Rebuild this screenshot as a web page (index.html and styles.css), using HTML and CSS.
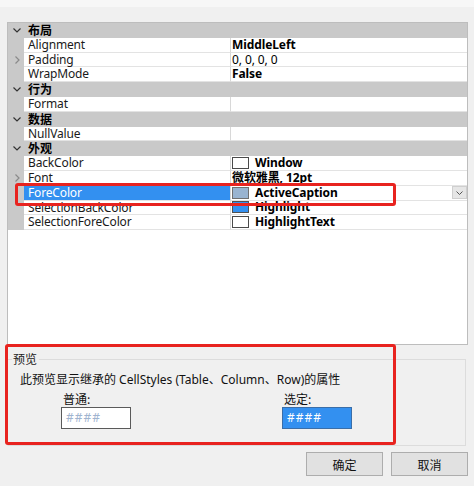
FILE: index.html
```html
<!DOCTYPE html>
<html lang="zh-CN">
<head>
<meta charset="utf-8">
<title>CellStyle 生成器</title>
<link rel="stylesheet" href="styles.css">
</head>
<body>
<div class="dialog">
  <div class="topstrip"></div>
  <div class="grid">
    <div class="cat"><span class="tog"><svg width="8" height="5" viewBox="0 0 8 5"><polyline points="0.5,0.5 4,4 7.5,0.5" fill="none" stroke="#333" stroke-width="1.2"/></svg></span><span class="cat-name">布局</span></div>
    <div class="row"><span class="mg"></span><span class="nm">Alignment</span><span class="vl b">MiddleLeft</span></div>
    <div class="row"><span class="mg"><svg width="5" height="8" viewBox="0 0 5 8"><polyline points="0.5,0.5 4,4 0.5,7.5" fill="none" stroke="#8a8a8a" stroke-width="1.2"/></svg></span><span class="nm">Padding</span><span class="vl">0, 0, 0, 0</span></div>
    <div class="row"><span class="mg"></span><span class="nm">WrapMode</span><span class="vl b">False</span></div>
    <div class="cat"><span class="tog"><svg width="8" height="5" viewBox="0 0 8 5"><polyline points="0.5,0.5 4,4 7.5,0.5" fill="none" stroke="#333" stroke-width="1.2"/></svg></span><span class="cat-name">行为</span></div>
    <div class="row"><span class="mg"></span><span class="nm">Format</span><span class="vl"></span></div>
    <div class="cat"><span class="tog"><svg width="8" height="5" viewBox="0 0 8 5"><polyline points="0.5,0.5 4,4 7.5,0.5" fill="none" stroke="#333" stroke-width="1.2"/></svg></span><span class="cat-name">数据</span></div>
    <div class="row"><span class="mg"></span><span class="nm">NullValue</span><span class="vl"></span></div>
    <div class="cat"><span class="tog"><svg width="8" height="5" viewBox="0 0 8 5"><polyline points="0.5,0.5 4,4 7.5,0.5" fill="none" stroke="#333" stroke-width="1.2"/></svg></span><span class="cat-name">外观</span></div>
    <div class="row"><span class="mg"></span><span class="nm">BackColor</span><span class="vl b"><i class="sw sw-white"></i>Window</span></div>
    <div class="row"><span class="mg"><svg width="5" height="8" viewBox="0 0 5 8"><polyline points="0.5,0.5 4,4 0.5,7.5" fill="none" stroke="#8a8a8a" stroke-width="1.2"/></svg></span><span class="nm">Font</span><span class="vl b">微软雅黑, 12pt</span></div>
    <div class="row sel"><span class="mg"></span><span class="nm">ForeColor</span><span class="vl b"><i class="sw sw-caption"></i>ActiveCaption<span class="dd"><svg width="7" height="4" viewBox="0 0 7 4"><polyline points="0.5,0.5 3.5,3.5 6.5,0.5" fill="none" stroke="#555" stroke-width="1"/></svg></span></span></div>
    <div class="row"><span class="mg"></span><span class="nm">SelectionBackColor</span><span class="vl b"><i class="sw sw-hl"></i>Highlight</span></div>
    <div class="row"><span class="mg"></span><span class="nm">SelectionForeColor</span><span class="vl b"><i class="sw sw-white"></i>HighlightText</span></div>
  </div>

  <fieldset class="preview">
    <legend>预览</legend>
    <p class="desc">此预览显示继承的 CellStyles (Table、Column、Row)的属性</p>
    <div class="samples">
      <div class="sample normal">
        <span class="lbl">普通:</span>
        <span class="box">####</span>
      </div>
      <div class="sample selected">
        <span class="lbl">选定:</span>
        <span class="box">####</span>
      </div>
    </div>
  </fieldset>

  <div class="buttons">
    <button class="btn">确定</button>
    <button class="btn">取消</button>
  </div>

  <div class="mark mark-row"></div>
  <div class="mark mark-preview"></div>
</div>
</body>
</html>
```

FILE: styles.css
```css
* { box-sizing: border-box; }
html, body {
  margin: 0;
  padding: 0;
  background: #f0f0f0;
}
body {
  font-family: "Noto Sans", "Noto Sans CJK SC", sans-serif;
  font-size: 12px;
  color: #000;
}
.dialog {
  position: relative;
  width: 474px;
  height: 486px;
  overflow: hidden;
  background: #f0f0f0;
}
.topstrip {
  height: 7px;
  background: #f7f7f7;
}
.grid {
  margin: 15px 6px 0 7px;
  height: 323px;
  background: #fff;
  border: 1px solid #bdbdbd;
}
.cat, .row {
  display: flex;
  height: 14.8px;
  line-height: 14px;
  white-space: nowrap;
}
.cat {
  background: #c9c9c9;
  font-family: "Noto Sans CJK SC", sans-serif;
  font-weight: bold;
}
.tog {
  width: 16px;
  display: flex;
  align-items: center;
  justify-content: center;
  padding-left: 2px;
}
.cat-name {
  padding-left: 4px;
  font-size: 12px;
}
.mg {
  width: 16px;
  flex: none;
  background: #c9c9c9;
  display: flex;
  align-items: center;
  justify-content: center;
  padding-left: 2px;
}
.nm {
  width: 206px;
  flex: none;
  padding-left: 4px;
  border-bottom: 1px solid #e3e3e3;
  letter-spacing: -0.15px;
  color: #1a1a1a;
}
.vl {
  flex: 1;
  display: flex;
  align-items: center;
  padding-left: 1px;
  border-left: 1px solid #d8d8d8;
  border-bottom: 1px solid #e3e3e3;
  letter-spacing: -0.1px;
}
.vl.b { font-weight: bold; }
.sel .nm {
  background: #3390f0;
  color: #fff;
}
.sw {
  width: 17px;
  height: 12px;
  border: 1px solid #4a4a4a;
  margin-right: 6px;
  flex: none;
}
.sw-white { background: #fff; }
.sw-caption { background: #99b4d1; border-color: #707070; }
.sw-hl { background: #3390f0; border-color: #505050; }
.dd {
  margin-left: auto;
  width: 15px;
  height: 13px;
  background: #e6e6e6;
  border: 1px solid #cfcfcf;
  display: flex;
  align-items: center;
  justify-content: center;
}
.preview {
  margin: 7px 8px 0 7px;
  padding: 0 0 12px 0;
  height: 94px;
  border: 1px solid #dcdcdc;
  border-left-color: #f0f0f0;
  font-family: "Noto Sans CJK SC", sans-serif;
}
.preview legend {
  margin-left: 4px;
  padding: 0 2px 0 1px;
  font-size: 12px;
  line-height: 14px;
  color: #222;
}
.desc {
  margin: 6px 0 0 12px;
  line-height: 16px;
  font-size: 12px;
  font-family: "Noto Sans", "Noto Sans CJK SC", sans-serif;
  color: #111;
}
.samples {
  display: flex;
  gap: 151px;
  padding-left: 53px;
  margin-top: 3px;
}
.sample {
  display: flex;
  flex-direction: column;
}
.lbl {
  padding-left: 2px;
  line-height: 16px;
  font-size: 12px;
  color: #111;
}
.box {
  width: 70px;
  height: 22px;
  border: 1px solid #5a5a5a;
  padding-left: 4px;
  line-height: 20px;
  font-family: "Noto Sans", sans-serif;
  font-size: 12px;
  letter-spacing: 1px;
}
.normal .box {
  background: #fff;
  color: #9fb4d0;
}
.selected .box {
  background: #3390f0;
  color: #fff;
  border-color: #3a6ea8;
}
.buttons {
  display: flex;
  justify-content: flex-end;
  gap: 8px;
  margin: 6px 6px 0 0;
}
.btn {
  width: 77px;
  height: 24px;
  background: #e1e1e1;
  border: 1px solid #adadad;
  font-family: "Noto Sans CJK SC", sans-serif;
  font-size: 12px;
  color: #111;
  padding: 0;
}
.mark {
  position: absolute;
  border: 3px solid #e8231f;
  border-radius: 3px;
}
.mark-row {
  left: 15px;
  top: 183px;
  width: 381px;
  height: 23px;
}
.mark-preview {
  left: 5px;
  top: 344px;
  width: 391px;
  height: 101px;
}
```
